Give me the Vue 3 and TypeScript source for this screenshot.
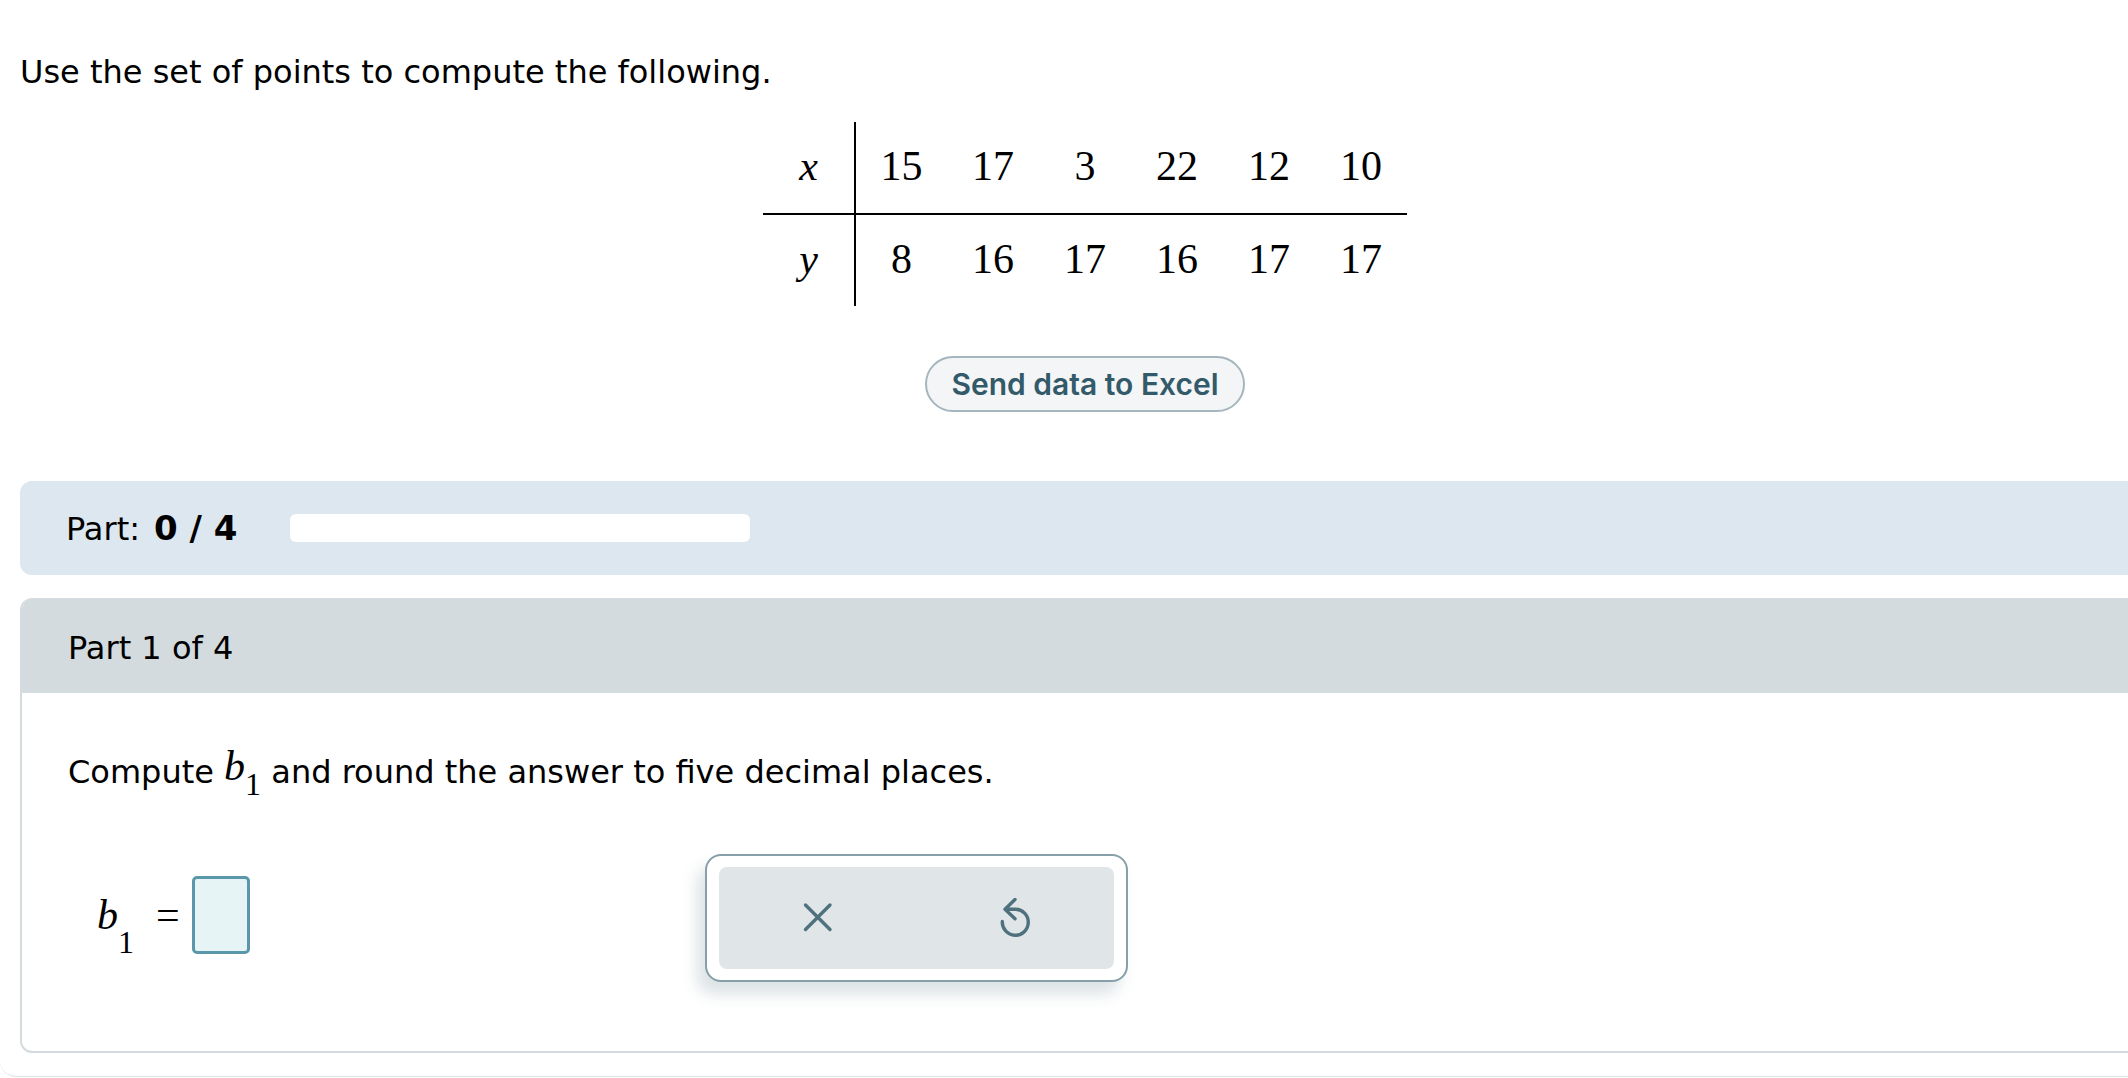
<script setup lang="ts">
import { ref } from 'vue'

interface DataRow {
  label: string
  values: number[]
}

const rows: DataRow[] = [
  { label: 'x', values: [15, 17, 3, 22, 12, 10] },
  { label: 'y', values: [8, 16, 17, 16, 17, 17] },
]

const partsDone = ref(0)
const partsTotal = 4
const answer = ref('')

function clearAnswer(): void {
  answer.value = ''
}
</script>

<template>
  <div class="page">
    <main class="question">
      <p class="intro">Use the set of points to compute the following.</p>

      <section class="data">
        <table class="points">
          <tbody>
            <tr v-for="row in rows" :key="row.label">
              <th scope="row">{{ row.label }}</th>
              <td v-for="(value, i) in row.values" :key="i">{{ value }}</td>
            </tr>
          </tbody>
        </table>
        <button type="button" class="excel">Send data to Excel</button>
      </section>

      <section class="progress">
        <div class="count"><span>Part:</span> <b>{{ partsDone }} / {{ partsTotal }}</b></div>
        <div class="track">
          <div class="fill" :style="{ width: (partsDone / partsTotal) * 100 + '%' }"></div>
        </div>
      </section>

      <section class="part">
        <h2>Part 1 of 4</h2>
        <div class="body">
          <p class="task">
            Compute <span class="math"><i>b</i><sub>1</sub></span> and round the answer to five decimal places.
          </p>
          <div class="work">
            <div class="equation">
              <label for="answer" class="math"><i>b</i><sub>1</sub><span class="equals">=</span></label>
              <input id="answer" v-model="answer" type="text" autocomplete="off" />
            </div>
            <div class="palette">
              <div class="tools">
                <button type="button" aria-label="Clear" @click="clearAnswer">
                  <svg width="40" height="40" viewBox="0 0 40 40">
                    <path d="M7.500 7 L32 31.500 M32 7 L7.500 31.500" />
                  </svg>
                </button>
                <button type="button" aria-label="Undo" @click="clearAnswer">
                  <svg width="40" height="40" viewBox="0 0 40 40">
                    <path d="M20 1.500 L10 11.200 L20 20.800 M10 11.200 H20.300 A13 13 0 1 1 7.300 23.500" />
                  </svg>
                </button>
              </div>
            </div>
          </div>
        </div>
      </section>
    </main>
  </div>
</template>

<style>
body {
  margin: 0;
  background: #fff;
}
</style>

<style scoped>
.page {
  overflow: hidden;
  font-family: Verdana, 'DejaVu Sans', sans-serif;
  font-size: 32px;
  line-height: 40px;
  color: #000;
}

/* The question card runs on past the right edge of the window. */
.question {
  margin-right: -42px;
  padding: 52px 20px 23px;
  border-bottom: 1px solid #e0e3e4;
  border-radius: 0 0 16px 16px;
}

.intro,
.task {
  margin: 0;
}

.data {
  display: flex;
  flex-direction: column;
  align-items: center;
  padding-top: 30px;
}

.points {
  border-collapse: collapse;
  table-layout: fixed;
  font-family: 'Liberation Serif', 'Times New Roman', serif;
  font-size: 42px;
}

.points th,
.points td {
  box-sizing: border-box;
  width: 92px;
  height: 92px;
  padding: 0 0 4px;
  text-align: center;
  vertical-align: middle;
}

.points th {
  border-right: 2px solid #000;
  font-style: italic;
  font-weight: 400;
}

.points tr:first-child > * {
  border-bottom: 2px solid #000;
}

.excel {
  height: 56px;
  margin-top: 50px;
  padding: 0 24px;
  border: 2px solid #a5b6be;
  border-radius: 28px;
  background: #f3f5f7;
  color: #335a69;
  font-family: 'Proxima Nova', Inter, sans-serif;
  font-size: 30px;
  font-weight: 600;
  white-space: nowrap;
}

.progress {
  display: flex;
  align-items: center;
  gap: 44px;
  height: 94px;
  margin-top: 69px;
  padding-left: 46px;
  border-radius: 12px;
  background: #dce7f0;
}

.count {
  display: flex;
  align-items: baseline;
  gap: 14px;
  min-width: 180px;
  white-space: nowrap;
}

.count b {
  font-size: 34px;
}

.track {
  width: 460px;
  height: 28px;
  overflow: hidden;
  border-radius: 6px;
  background: #fff;
}

.fill {
  height: 100%;
  background: #5a98a9;
}

.part {
  margin-top: 23px;
  border: 2px solid #d3dbde;
  border-top: 0;
  border-radius: 12px;
  overflow: hidden;
}

.part h2 {
  margin: 0;
  padding: 30px 46px 25px;
  background: #d3dbde;
  font-size: 32px;
  font-weight: 400;
}

.body {
  padding: 52px 46px 69px;
}

.task {
  white-space: nowrap;
}

.math {
  font-family: 'Liberation Serif', 'Times New Roman', serif;
  font-size: 42px;
  line-height: 1;
}

.math sub {
  font-size: 32px;
  line-height: 1;
}

.task .math {
  display: inline-flex;
  align-items: baseline;
  height: 40px;
  vertical-align: 3px;
}

.task sub {
  position: relative;
  top: 15px;
  vertical-align: baseline;
}

.work {
  display: flex;
  align-items: flex-start;
  padding-top: 62px;
}

.equation {
  display: flex;
  align-items: center;
  width: 637px;
  padding: 22px 0 0 29px;
  box-sizing: border-box;
}

.equation .math {
  display: flex;
  align-items: baseline;
}

.equation sub {
  position: relative;
  top: 24px;
  vertical-align: baseline;
}

.equals {
  padding: 0 12px 0 22px;
}

.equation input {
  box-sizing: border-box;
  width: 58px;
  height: 78px;
  padding: 0 8px;
  border: 3px solid #5a98a9;
  border-radius: 5px;
  outline: 0;
  background: #e6f4f6;
  font-family: 'Liberation Serif', 'Times New Roman', serif;
  font-size: 42px;
}

.palette {
  box-sizing: border-box;
  width: 423px;
  height: 128px;
  padding: 11px 12px;
  border: 2px solid #879fa9;
  border-radius: 16px;
  background: #fff;
  box-shadow: -8px 12px 16px rgba(79, 111, 124, 0.2);
}

.tools {
  display: flex;
  height: 100%;
  border-radius: 8px;
  background: #e0e6e8;
}

.tools button {
  display: flex;
  flex: 1;
  align-items: center;
  justify-content: center;
  padding: 0;
  border: 0;
  background: none;
}

.tools path {
  fill: none;
  stroke: #4f717e;
  stroke-width: 3.4;
  stroke-linecap: round;
  stroke-linejoin: round;
}
</style>
